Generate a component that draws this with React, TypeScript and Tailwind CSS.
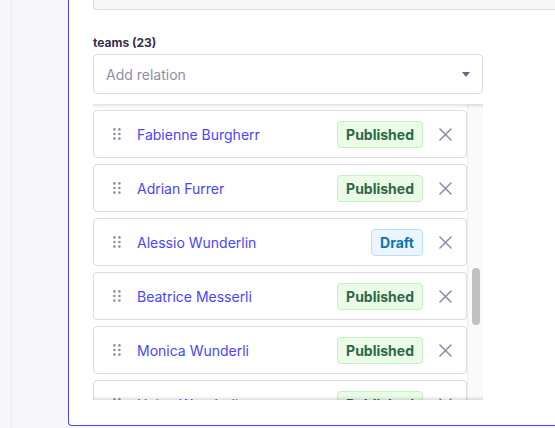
import React from "react";

type Team = { name: string; status: "published" | "draft" };

const teams: Team[] = [
  { name: "Fabienne Burgherr", status: "published" },
  { name: "Adrian Furrer", status: "published" },
  { name: "Alessio Wunderlin", status: "draft" },
  { name: "Beatrice Messerli", status: "published" },
  { name: "Monica Wunderli", status: "published" },
  { name: "Heinz Wunderli", status: "published" },
];

const Handle = () => (
  <svg width="8" height="12" viewBox="0 0 8 12" fill="#8e8ea9">
    <circle cx="1.4" cy="1.4" r="1.3" />
    <circle cx="6.4" cy="1.4" r="1.3" />
    <circle cx="1.4" cy="6" r="1.3" />
    <circle cx="6.4" cy="6" r="1.3" />
    <circle cx="1.4" cy="10.6" r="1.3" />
    <circle cx="6.4" cy="10.6" r="1.3" />
  </svg>
);

const Cross = () => (
  <svg width="13" height="13" viewBox="0 0 13 13" stroke="#8e8ea9" strokeWidth="1.6" strokeLinecap="round">
    <line x1="1" y1="1" x2="12" y2="12" />
    <line x1="12" y1="1" x2="1" y2="12" />
  </svg>
);

const Badge = ({ status }: { status: Team["status"] }) =>
  status === "published" ? (
    <span className="rounded-[4px] border border-[#c6f0c2] bg-[#eafbe7] px-2 py-[3px] text-[14px] font-bold leading-[19px] text-[#2f6846]">
      Published
    </span>
  ) : (
    <span className="rounded-[4px] border border-[#b8e1ff] bg-[#eaf5ff] px-2 py-[3px] text-[14px] font-bold leading-[19px] text-[#0c75af]">
      Draft
    </span>
  );

export default function App() {
  return (
    <div
      className="flex h-[428px] w-[555px] overflow-hidden bg-[#f6f6f9]"
      style={{ fontFamily: "Inter, 'Noto Sans', sans-serif" }}
    >
      {/* left rail */}
      <div className="h-full w-[12px] shrink-0 border-r border-[#eaeaef]" />
      <div className="h-full w-[56px] shrink-0" />

      {/* edit panel */}
      <div className="h-[426px] flex-1 rounded-bl-[4px] border-b border-l border-[#4945ff] bg-white pl-[24px]">
        <div className="h-[10px] rounded-bl-[4px] border-b border-l border-[#dcdce4] bg-[#f6f6f9]" />

        <div className="mt-[25px] text-[12px] font-bold leading-[16px] text-[#32324d]">teams (23)</div>

        <div className="mt-[3px] flex h-[40px] w-[390px] items-center justify-between rounded-[4px] border border-[#dcdce4] bg-white pl-[12px] pr-[12px]">
          <span className="text-[14px] text-[#8e8ea9]">Add relation</span>
          <svg width="8" height="5" viewBox="0 0 8 5" fill="#666687">
            <path d="M0 0h8L4 5z" />
          </svg>
        </div>

        {/* relation list */}
        <div className="relative mt-[10px] flex h-[296px] w-[390px] overflow-hidden">
          <div className="flex w-[374px] flex-col gap-[6px] pt-[6px]">
            {teams.map((t) => (
              <div
                key={t.name}
                className="flex h-[48px] shrink-0 items-center rounded-[4px] border border-[#dcdce4] bg-white pl-[19px] pr-[14px]"
              >
                <Handle />
                <span className="ml-[16px] flex-1 text-[14px] text-[#4945ff]">{t.name}</span>
                <Badge status={t.status} />
                <span className="ml-[16px] flex">
                  <Cross />
                </span>
              </div>
            ))}
          </div>

          <div className="relative w-[16px] border-l border-[#ececec] bg-[#fafafa]">
            <div className="absolute left-[4px] top-[164px] h-[57px] w-[8px] rounded-full bg-[#c1c1c1]" />
          </div>

          <div className="pointer-events-none absolute left-0 right-0 top-0 h-[4px] bg-gradient-to-b from-[#0000001f] to-transparent" />
          <div className="pointer-events-none absolute bottom-0 left-0 right-0 h-[4px] bg-gradient-to-t from-[#0000001f] to-transparent" />
        </div>
      </div>
    </div>
  );
}
